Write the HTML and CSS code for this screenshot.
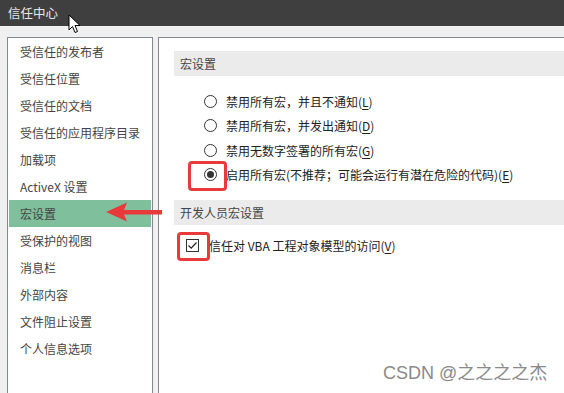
FILE: index.html
```html
<!DOCTYPE html>
<html lang="zh-CN">
<head>
  <meta charset="UTF-8" />
  <title>信任中心</title>
  <link rel="stylesheet" href="styles.css">
</head>
<body>

<div class="titlebar">
  <span class="title">信任中心</span>
  <svg class="cursor" width="13" height="20" viewBox="0 0 13 20">
    <path d="M1 1 L1 16 L4.5 12.5 L7 18.5 L9.5 17.5 L7 11.5 L12 11.5 Z" fill="#fff" stroke="#000" stroke-width="1" stroke-linejoin="round"/>
  </svg>
</div>

<div class="main">
  <div class="nav">
    <div class="nav-item">受信任的发布者</div>
    <div class="nav-item">受信任位置</div>
    <div class="nav-item">受信任的文档</div>
    <div class="nav-item">受信任的应用程序目录</div>
    <div class="nav-item">加载项</div>
    <div class="nav-item">ActiveX 设置</div>
    <div class="nav-item active">宏设置</div>
    <div class="nav-item">受保护的视图</div>
    <div class="nav-item">消息栏</div>
    <div class="nav-item">外部内容</div>
    <div class="nav-item">文件阻止设置</div>
    <div class="nav-item">个人信息选项</div>
  </div>

  <div class="content">
    <div class="section-head">宏设置</div>
    <div class="options">
      <div class="option">
        <span class="radio"></span>
        <span>禁用所有宏，并且不通知(<u>L</u>)</span>
      </div>
      <div class="option">
        <span class="radio"></span>
        <span>禁用所有宏，并发出通知(<u>D</u>)</span>
      </div>
      <div class="option">
        <span class="radio"></span>
        <span>禁用无数字签署的所有宏(<u>G</u>)</span>
      </div>
      <div class="option">
        <span class="radio checked"><span class="mark radio-mark"></span></span>
        <span>启用所有宏(不推荐；可能会运行有潜在危险的代码)(<u>E</u>)</span>
      </div>
    </div>

    <div class="section-head">开发人员宏设置</div>
    <div class="check-row">
      <span class="checkbox">
        <svg width="11" height="11" viewBox="0 0 11 11">
          <path d="M1.5 5.5 L4.2 8.2 L9.5 2.5" fill="none" stroke="#222" stroke-width="1.2"/>
        </svg>
        <span class="mark check-mark"></span>
      </span>
      <span>信任对 VBA 工程对象模型的访问(<u>V</u>)</span>
    </div>
  </div>
</div>

<svg class="arrow" width="56" height="22" viewBox="0 0 56 22">
  <path d="M0 11 L21 1.5 L18 9 L56 9 L56 13.5 L18 13.5 L21 20.5 Z" fill="#e8393b"/>
</svg>

<div class="watermark">CSDN @之之之之杰</div>

</body>
</html>
```

FILE: styles.css
```css
body {
  margin: 0;
  background: #f0f0f0;
  font-family: "Noto Sans CJK SC", "Liberation Sans", sans-serif;
  font-size: 12px;
  color: #333;
  height: 393px;
  overflow: hidden;
  position: relative;
}
.titlebar {
  height: 26px;
  background: #3f3f3f;
  position: relative;
}
.title {
  display: block;
  padding-left: 8px;
  line-height: 26px;
  font-size: 12.5px;
  color: #e8e8e8;
}
.cursor {
  position: absolute;
  left: 68px;
  top: 14px;
}
.main {
  display: flex;
  gap: 5px;
  padding: 11px 0 0 7px;
  height: 356px;
}
.nav {
  width: 146px;
  box-sizing: border-box;
  border: 1px solid #828790;
  border-bottom: none;
  background: #fff;
  padding: 0 1px;
}
.nav-item {
  height: 27px;
  line-height: 27px;
  padding-left: 11px;
  color: #444;
}
.nav-item.active {
  background: #80bf9c;
}
.content {
  flex: 1;
  background: #fff;
  border-left: 1px solid #828790;
  border-top: 1px solid #828790;
  padding: 13px 0 0 15px;
}
.section-head {
  height: 25px;
  line-height: 25px;
  background: #ebebeb;
  padding-left: 6px;
  color: #444;
}
.options {
  padding: 13px 0 13px 30px;
}
.option {
  height: 24.5px;
  display: flex;
  align-items: center;
  gap: 9px;
  color: #222;
}
.radio {
  width: 11px;
  height: 11px;
  border: 1px solid #333;
  border-radius: 50%;
  background: #fff;
  position: relative;
  flex-shrink: 0;
}
.radio.checked::after {
  content: "";
  position: absolute;
  left: 2px;
  top: 2px;
  width: 7px;
  height: 7px;
  border-radius: 50%;
  background: #333;
}
.mark {
  position: absolute;
  border: 3px solid #e8393b;
  border-radius: 4px;
}
.radio-mark {
  left: -17px;
  top: -8px;
  width: 33px;
  height: 24px;
}
.check-row {
  display: flex;
  align-items: center;
  gap: 10px;
  padding: 12px 0 0 12px;
  color: #222;
}
.checkbox {
  width: 11px;
  height: 11px;
  border: 1px solid #333;
  background: #fff;
  position: relative;
  flex-shrink: 0;
}
.checkbox svg {
  display: block;
}
.check-mark {
  left: -10px;
  top: -8px;
  width: 27px;
  height: 23px;
}
u {
  text-decoration-thickness: 1px;
  text-underline-offset: 2px;
}
.arrow {
  position: absolute;
  left: 106px;
  top: 201px;
}
.watermark {
  position: absolute;
  left: 383px;
  top: 358px;
  font-family: "Liberation Sans", "Noto Sans CJK SC", sans-serif;
  font-size: 18px;
  color: #8a8a8a;
  text-shadow: 0 0 2px #fff;
}
```
